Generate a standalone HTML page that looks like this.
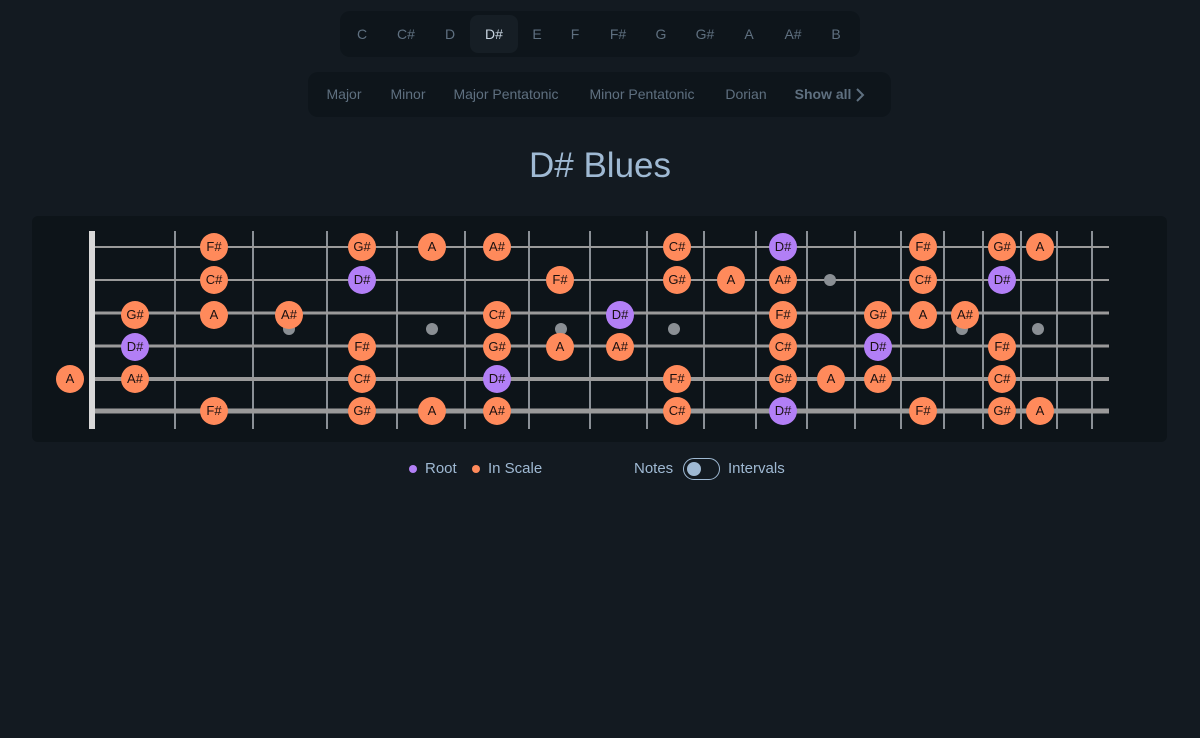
<!DOCTYPE html><html><head><style>
body{margin:0;background:#131a21;width:1200px;height:738px;overflow:hidden;font-family:"Liberation Sans",sans-serif;position:relative}
.bar{position:absolute;background:#0e151b;border-radius:10px}
.bar span{position:absolute;top:0;transform:translateX(-50%);color:#5f7080;font-size:14px;line-height:46px;white-space:nowrap}
.title{position:absolute;top:146px;width:100%;text-align:center;color:#9fb9d3;font-size:35px}
.fb{position:absolute;left:32px;top:216px;width:1135px;height:226px;background:#0d1419;border-radius:6px}
.n{position:absolute;width:28px;height:28px;border-radius:50%;background:#ff8a5b;color:#1a1010;font-size:13px;text-align:center;line-height:28px;margin:-14px 0 0 -14px}
.r{background:#b27ff6}
.leg{position:absolute;top:459px;color:#9fb9d3;font-size:15px;line-height:20px}
</style></head><body>
<div class="bar" style="left:340px;top:11px;width:520px;height:46px">
<div style="position:absolute;left:130px;top:4px;width:48px;height:38px;background:#161e25;border-radius:8px"></div>
<span style="left:22px">C</span><span style="left:66px">C#</span><span style="left:110px">D</span><span style="left:154px;color:#c8d4e0">D#</span><span style="left:197px">E</span><span style="left:235px">F</span><span style="left:278px">F#</span><span style="left:321px">G</span><span style="left:365px">G#</span><span style="left:409px">A</span><span style="left:453px">A#</span><span style="left:496px">B</span>
</div>
<div class="bar" style="left:308px;top:72px;width:583px;height:45px">
<span style="left:36px;line-height:45px">Major</span><span style="left:100px;line-height:45px">Minor</span><span style="left:198px;line-height:45px">Major Pentatonic</span><span style="left:334px;line-height:45px">Minor Pentatonic</span><span style="left:438px;line-height:45px">Dorian</span><span style="left:515px;line-height:45px;font-weight:bold">Show all</span>
<svg style="position:absolute;left:546px;top:15px" width="12" height="16"><path d="M3 2l6 6-6 6" stroke="#5f7080" stroke-width="2" fill="none"/></svg>
</div>
<div class="title">D# Blues</div>
<div class="fb"></div>
<svg style="position:absolute;left:0;top:0" width="1200" height="738">
<g stroke="#8a9096" stroke-width="2">
<line x1="175" y1="231" x2="175" y2="429"/><line x1="253" y1="231" x2="253" y2="429"/><line x1="327" y1="231" x2="327" y2="429"/><line x1="397" y1="231" x2="397" y2="429"/><line x1="465" y1="231" x2="465" y2="429"/><line x1="529" y1="231" x2="529" y2="429"/><line x1="590" y1="231" x2="590" y2="429"/><line x1="647" y1="231" x2="647" y2="429"/><line x1="704" y1="231" x2="704" y2="429"/><line x1="756" y1="231" x2="756" y2="429"/><line x1="807" y1="231" x2="807" y2="429"/><line x1="855" y1="231" x2="855" y2="429"/><line x1="901" y1="231" x2="901" y2="429"/><line x1="944" y1="231" x2="944" y2="429"/><line x1="983" y1="231" x2="983" y2="429"/><line x1="1021" y1="231" x2="1021" y2="429"/><line x1="1057" y1="231" x2="1057" y2="429"/><line x1="1092" y1="231" x2="1092" y2="429"/>
</g>
<g stroke="#9a9a9a">
<line x1="92" y1="247" x2="1109" y2="247" stroke-width="2"/><line x1="92" y1="280" x2="1109" y2="280" stroke-width="2"/><line x1="92" y1="313" x2="1109" y2="313" stroke-width="3"/><line x1="92" y1="346" x2="1109" y2="346" stroke-width="3"/><line x1="92" y1="379" x2="1109" y2="379" stroke-width="4"/><line x1="92" y1="411" x2="1109" y2="411" stroke-width="5"/>
</g>
<rect x="89" y="231" width="6" height="198" fill="#d8d8d8"/>
<g fill="#8a8f94"><circle cx="289" cy="329" r="6"/><circle cx="432" cy="329" r="6"/><circle cx="561" cy="329" r="6"/><circle cx="674" cy="329" r="6"/><circle cx="962" cy="329" r="6"/><circle cx="1038" cy="329" r="6"/><circle cx="830" cy="280" r="6"/></g>
</svg>
<div class="n" style="left:214px;top:247px">F#</div><div class="n" style="left:362px;top:247px">G#</div><div class="n" style="left:432px;top:247px">A</div><div class="n" style="left:497px;top:247px">A#</div><div class="n" style="left:677px;top:247px">C#</div><div class="n r" style="left:783px;top:247px">D#</div><div class="n" style="left:923px;top:247px">F#</div><div class="n" style="left:1002px;top:247px">G#</div><div class="n" style="left:1040px;top:247px">A</div>
<div class="n" style="left:214px;top:280px">C#</div><div class="n r" style="left:362px;top:280px">D#</div><div class="n" style="left:560px;top:280px">F#</div><div class="n" style="left:677px;top:280px">G#</div><div class="n" style="left:731px;top:280px">A</div><div class="n" style="left:783px;top:280px">A#</div><div class="n" style="left:923px;top:280px">C#</div><div class="n r" style="left:1002px;top:280px">D#</div>
<div class="n" style="left:135px;top:315px">G#</div><div class="n" style="left:214px;top:315px">A</div><div class="n" style="left:289px;top:315px">A#</div><div class="n" style="left:497px;top:315px">C#</div><div class="n r" style="left:620px;top:315px">D#</div><div class="n" style="left:783px;top:315px">F#</div><div class="n" style="left:878px;top:315px">G#</div><div class="n" style="left:923px;top:315px">A</div><div class="n" style="left:965px;top:315px">A#</div>
<div class="n r" style="left:135px;top:347px">D#</div><div class="n" style="left:362px;top:347px">F#</div><div class="n" style="left:497px;top:347px">G#</div><div class="n" style="left:560px;top:347px">A</div><div class="n" style="left:620px;top:347px">A#</div><div class="n" style="left:783px;top:347px">C#</div><div class="n r" style="left:878px;top:347px">D#</div><div class="n" style="left:1002px;top:347px">F#</div>
<div class="n" style="left:70px;top:379px">A</div><div class="n" style="left:135px;top:379px">A#</div><div class="n" style="left:362px;top:379px">C#</div><div class="n r" style="left:497px;top:379px">D#</div><div class="n" style="left:677px;top:379px">F#</div><div class="n" style="left:783px;top:379px">G#</div><div class="n" style="left:831px;top:379px">A</div><div class="n" style="left:878px;top:379px">A#</div><div class="n" style="left:1002px;top:379px">C#</div>
<div class="n" style="left:214px;top:411px">F#</div><div class="n" style="left:362px;top:411px">G#</div><div class="n" style="left:432px;top:411px">A</div><div class="n" style="left:497px;top:411px">A#</div><div class="n" style="left:677px;top:411px">C#</div><div class="n r" style="left:783px;top:411px">D#</div><div class="n" style="left:923px;top:411px">F#</div><div class="n" style="left:1002px;top:411px">G#</div><div class="n" style="left:1040px;top:411px">A</div>
<div style="position:absolute;left:409px;top:465px;width:8px;height:8px;border-radius:50%;background:#b27ff6"></div>
<div class="leg" style="left:425px">Root</div>
<div style="position:absolute;left:472px;top:465px;width:8px;height:8px;border-radius:50%;background:#ff8a5b"></div>
<div class="leg" style="left:488px">In Scale</div>
<div class="leg" style="left:634px">Notes</div>
<div style="position:absolute;left:683px;top:458px;width:37px;height:22px;border:1.5px solid #9fb9d3;border-radius:12px;box-sizing:border-box"></div>
<div style="position:absolute;left:687px;top:462px;width:14px;height:14px;border-radius:50%;background:#9fb9d3"></div>
<div class="leg" style="left:728px">Intervals</div>
</body></html>
